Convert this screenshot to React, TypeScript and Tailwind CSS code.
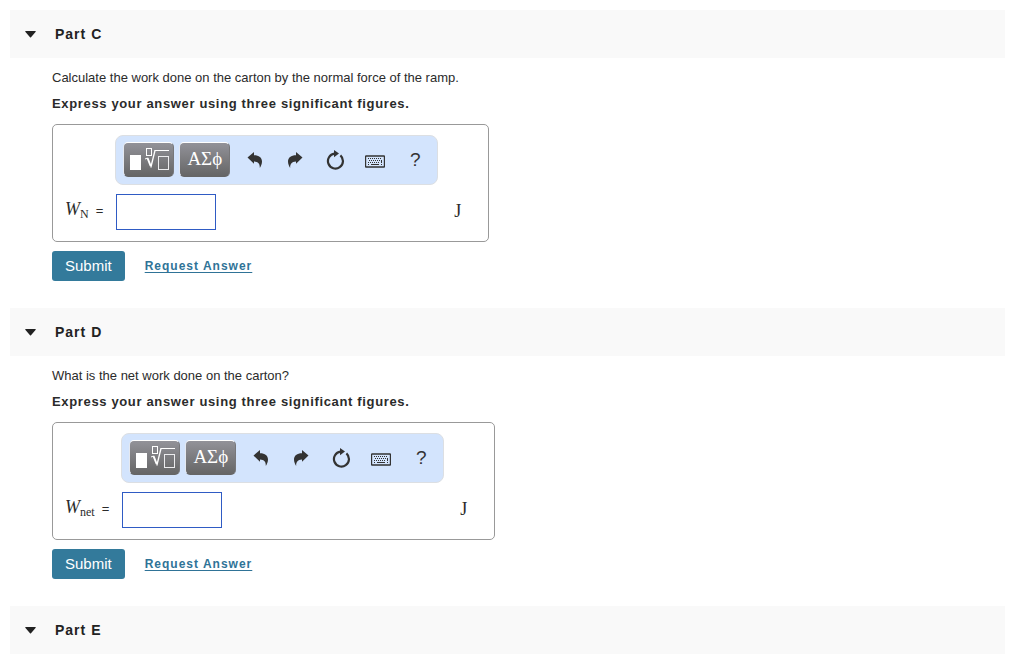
import type { ReactNode } from 'react';

interface Question { part: string; prompt: string; subscript: string; unit: string; }

const QUESTIONS: Question[] = [
  { part: 'C', prompt: 'Calculate the work done on the carton by the normal force of the ramp.', subscript: 'N', unit: 'J' },
  { part: 'D', prompt: 'What is the net work done on the carton?', subscript: 'net', unit: 'J' },
];

function TemplateIcon() {
  return (
    <svg width="41" height="23" viewBox="0 0 41 23" fill="none" stroke="white" className="shrink-0" aria-hidden="true">
      <rect x="2" y="7" width="11" height="15" fill="white" stroke="none" />
      <rect x="18.5" y=".5" width="5" height="7" />
      <path d="M17 11l2.5-1" />
      <path d="M19.5 10l3.2 8" strokeWidth="2" />
      <path d="M22.8 19.5L27 2.5" strokeWidth="1.3" />
      <path d="M26.5 2.5H41" />
      <rect x="30.5" y="8.5" width="10" height="13" stroke="#ececee" />
    </svg>
  );
}

function UndoIcon() {
  return (
    <svg width="16" height="18" viewBox="0 0 16 18" fill="#333" aria-hidden="true">
      <path d="M.5 6.5L7 1v3.2c5 0 8 2.3 8 6.3 0 2.3-.9 4.5-2.2 6.5.2-3.7-1.2-6.5-5.8-6.6v2.4z" />
    </svg>
  );
}

function RedoIcon() {
  return (
    <svg width="16" height="18" viewBox="0 0 16 18" fill="#333" aria-hidden="true">
      <path d="M15.5 6.5L9 1v3.2c-5 0-8 2.3-8 6.3 0 2.3.9 4.5 2.2 6.5-.2-3.7 1.2-6.5 5.8-6.6v2.4z" />
    </svg>
  );
}

function ResetIcon() {
  return (
    <svg width="20" height="20" viewBox="0 0 20 20" fill="none" aria-hidden="true">
      <path d="M15.4 5.4A7.5 7.5 0 1 1 9.5 3.6" stroke="#333" strokeWidth="2.2" />
      <path d="M9 0l5 3.6L9 7.2z" fill="#333" />
    </svg>
  );
}

function KeyboardIcon() {
  return (
    <svg width="20" height="13" viewBox="0 0 20 13" fill="none" stroke="#333" aria-hidden="true">
      <rect x=".5" y="1" width="19" height="11" rx=".5" strokeWidth="1.4" />
      <path d="M3 3.5h14M4 5.5h11M3 7.5h12" strokeDasharray="1 1" />
      <path d="M16.5 5v3" />
      <path d="M3 9.5h1M6 9.5h8M16 9.5h1" />
    </svg>
  );
}

function PaletteButton({ label, children }: { label: string; children: ReactNode }) {
  return (
    <button
      type="button"
      aria-label={label}
      className="flex h-[35px] w-[51px] items-center justify-center rounded-[5px] border border-t-white border-l-[#e4e8f0] border-r-[#77777a] border-b-[#666] bg-linear-to-b from-[#929299] to-[#666] text-white"
    >
      {children}
    </button>
  );
}

function ToolButton({ label, children }: { label: string; children: ReactNode }) {
  return (
    <button type="button" aria-label={label} className="flex h-[35px] w-10 items-center justify-center text-[#333]">
      {children}
    </button>
  );
}

function Toolbar() {
  return (
    <div role="toolbar" className="flex h-[50px] items-start rounded-lg border border-[#dcdfe3] bg-[#d3e4fd] pt-[6px] pr-[2px] pl-[7px]">
      <div className="flex gap-[5px] pr-[5px]">
        <PaletteButton label="Templates"><TemplateIcon /></PaletteButton>
        <PaletteButton label="Symbols">
          <span className="pb-[2px] font-['Liberation_Serif',serif] text-[19px] leading-5">ΑΣϕ</span>
        </PaletteButton>
      </div>
      <ToolButton label="Undo"><UndoIcon /></ToolButton>
      <ToolButton label="Redo"><RedoIcon /></ToolButton>
      <ToolButton label="Reset"><ResetIcon /></ToolButton>
      <ToolButton label="Keyboard shortcuts"><span className="pt-1"><KeyboardIcon /></span></ToolButton>
      <ToolButton label="Help"><span className="text-[19px] leading-5">?</span></ToolButton>
    </div>
  );
}

function PartHeader({ part }: { part: string }) {
  return (
    <h2 className="bg-[#f9f9f9]">
      <button type="button" className="flex h-12 w-full items-center gap-[19px] pl-[15px] text-left text-[14px] leading-5 font-bold tracking-[1px] text-[#222]">
        <svg width="11" height="7" viewBox="0 0 11 7" fill="#222" aria-hidden="true">
          <path d="M.8 0h9.4q1.1.2.3 1.1L6 6.3q-.5.5-1 0L.5 1.1Q-.3.2.8 0z" />
        </svg>
        <span>Part {part}</span>
      </button>
    </h2>
  );
}

function AnswerForm({ question }: { question: Question }) {
  const { part, prompt, subscript, unit } = question;
  const id = `answer-${part}`;

  return (
    <form className="px-[42px] pt-[10px] pb-[27px]" onSubmit={(e) => e.preventDefault()}>
      <p className="text-[13px] leading-5">{prompt}</p>
      <p className="mt-[6px] text-[13px] leading-5 font-bold tracking-wider">Express your answer using three significant figures.</p>

      <div className="mt-[10px] grid w-fit grid-cols-[auto_auto_auto] items-center gap-y-[9px] rounded-[5px] border border-[#999] pt-[10px] pr-[27px] pb-[11px] pl-3">
        <div className="col-start-2"><Toolbar /></div>
        <label htmlFor={id} className="col-start-1 flex items-baseline pr-3 pb-1 font-['Liberation_Serif',serif]">
          <i className="text-[18px] leading-5">W</i>
          <sub className="text-[12px] leading-3">{subscript}</sub>
          <span className="pl-[7px] font-['Liberation_Sans',sans-serif] text-[13px]">=</span>
        </label>
        <input id={id} type="text" autoComplete="off" className="ml-px h-9 w-[100px] border border-[#2f5bc4] bg-white px-2 text-[16px] outline-none" />
        <span className="pb-[2px] pl-4 font-['Liberation_Serif',serif] text-[18px] leading-5">{unit}</span>
      </div>

      <div className="mt-[9px] flex items-center gap-5">
        <button type="submit" className="h-[30px] rounded-[3px] bg-[#337a9b] px-[13px] text-[15px] leading-5 text-white">Submit</button>
        <a href="#" className="text-[12px] leading-4 font-bold tracking-[1px] text-[#2f7397] underline underline-offset-2">Request Answer</a>
      </div>
    </form>
  );
}

export default function App() {
  return (
    <main className="bg-white pt-[10px] pr-[19px] pl-[10px] font-['Liberation_Sans',Arial,sans-serif] text-[#2b2b2b]">
      {QUESTIONS.map((question) => (
        <section key={question.part}>
          <PartHeader part={question.part} />
          <AnswerForm question={question} />
        </section>
      ))}
      <PartHeader part="E" />
    </main>
  );
}
